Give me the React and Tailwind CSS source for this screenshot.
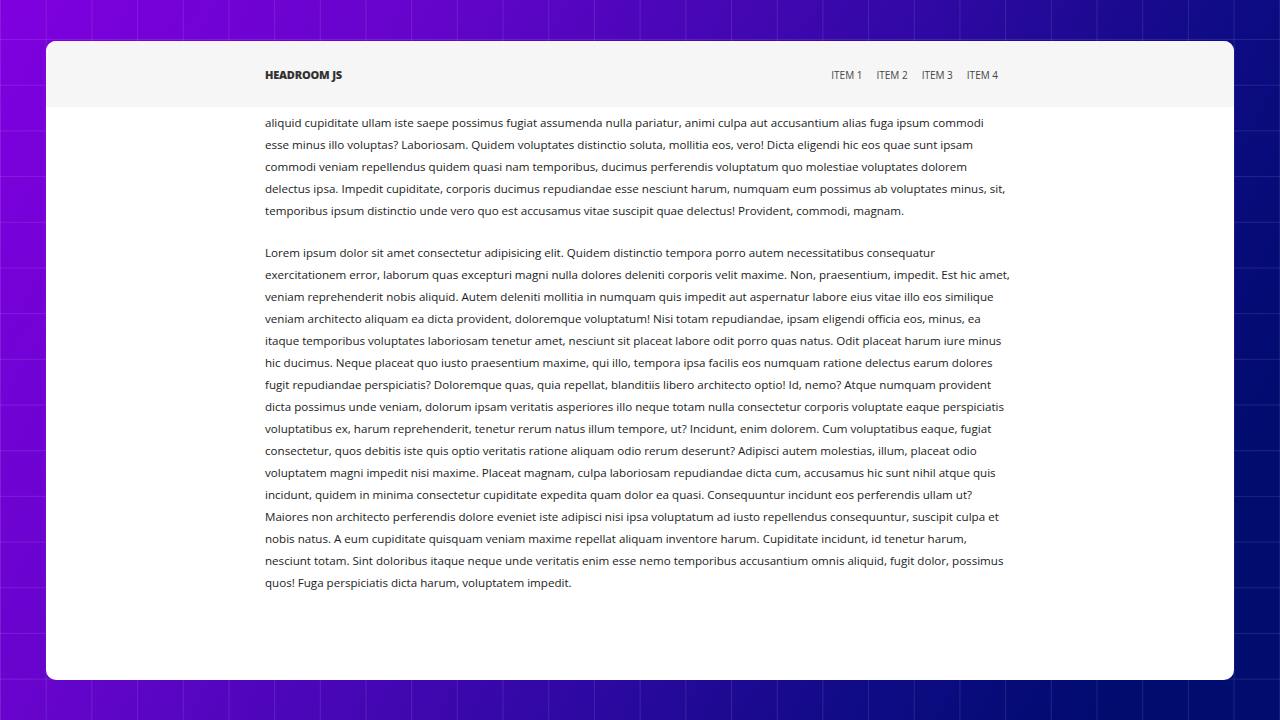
const firstLines = [
  'aliquid cupiditate ullam iste saepe possimus fugiat assumenda nulla pariatur, animi culpa aut accusantium alias fuga ipsum commodi',
  'esse minus illo voluptas? Laboriosam. Quidem voluptates distinctio soluta, mollitia eos, vero! Dicta eligendi hic eos quae sunt ipsam',
  'commodi veniam repellendus quidem quasi nam temporibus, ducimus perferendis voluptatum quo molestiae voluptates dolorem',
  'delectus ipsa. Impedit cupiditate, corporis ducimus repudiandae esse nesciunt harum, numquam eum possimus ab voluptates minus, sit,',
  'temporibus ipsum distinctio unde vero quo est accusamus vitae suscipit quae delectus! Provident, commodi, magnam.',
];

const secondLines = [
  'Lorem ipsum dolor sit amet consectetur adipisicing elit. Quidem distinctio tempora porro autem necessitatibus consequatur',
  'exercitationem error, laborum quas excepturi magni nulla dolores deleniti corporis velit maxime. Non, praesentium, impedit. Est hic amet,',
  'veniam reprehenderit nobis aliquid. Autem deleniti mollitia in numquam quis impedit aut aspernatur labore eius vitae illo eos similique',
  'veniam architecto aliquam ea dicta provident, doloremque voluptatum! Nisi totam repudiandae, ipsam eligendi officia eos, minus, ea',
  'itaque temporibus voluptates laboriosam tenetur amet, nesciunt sit placeat labore odit porro quas natus. Odit placeat harum iure minus',
  'hic ducimus. Neque placeat quo iusto praesentium maxime, qui illo, tempora ipsa facilis eos numquam ratione delectus earum dolores',
  'fugit repudiandae perspiciatis? Doloremque quas, quia repellat, blanditiis libero architecto optio! Id, nemo? Atque numquam provident',
  'dicta possimus unde veniam, dolorum ipsam veritatis asperiores illo neque totam nulla consectetur corporis voluptate eaque perspiciatis',
  'voluptatibus ex, harum reprehenderit, tenetur rerum natus illum tempore, ut? Incidunt, enim dolorem. Cum voluptatibus eaque, fugiat',
  'consectetur, quos debitis iste quis optio veritatis ratione aliquam odio rerum deserunt? Adipisci autem molestias, illum, placeat odio',
  'voluptatem magni impedit nisi maxime. Placeat magnam, culpa laboriosam repudiandae dicta cum, accusamus hic sunt nihil atque quis',
  'incidunt, quidem in minima consectetur cupiditate expedita quam dolor ea quasi. Consequuntur incidunt eos perferendis ullam ut?',
  'Maiores non architecto perferendis dolore eveniet iste adipisci nisi ipsa voluptatum ad iusto repellendus consequuntur, suscipit culpa et',
  'nobis natus. A eum cupiditate quisquam veniam maxime repellat aliquam inventore harum. Cupiditate incidunt, id tenetur harum,',
  'nesciunt totam. Sint doloribus itaque neque unde veritatis enim esse nemo temporibus accusantium omnis aliquid, fugit dolor, possimus',
  'quos! Fuga perspiciatis dicta harum, voluptatem impedit.',
];

const navItems = ['ITEM 1', 'ITEM 2', 'ITEM 3', 'ITEM 4'];

// keeps the original line breaks of the copy
const Paragraph = ({ lines }) => (
  <p className="mb-5 text-[11.6px] leading-[22px] text-[#222]">
    {lines.map((line, i) => (
      <span key={i} className="block whitespace-nowrap">{line}</span>
    ))}
  </p>
);

export default function App() {
  return (
    <div
      className="h-[720px] w-full overflow-hidden bg-[linear-gradient(118deg,#7f00df_0%,#6604cc_25%,#3208a6_55%,#0e0b84_75%,#000c6e_90%)]"
      style={{ fontFamily: '"Open Sans", "Liberation Sans", sans-serif' }}
    >
      {/* grid pattern */}
      <div className="h-full w-full bg-[linear-gradient(to_right,rgba(255,255,255,0.1)_1px,transparent_1px),linear-gradient(to_bottom,rgba(255,255,255,0.1)_1px,transparent_1px)] bg-[size:45.7px_45.7px] bg-[position:0px_39px] pt-[41px] px-[46px] pb-[40px]">
        <div className="flex h-full flex-col overflow-hidden rounded-[10px] bg-white">
          {/* Header */}
          <header className="h-[66px] shrink-0 bg-[#f6f6f6] pr-[15px] pt-[2px]">
            <div className="mx-auto flex h-full w-[735px] items-center justify-between">
              <span className="text-[11px] font-extrabold tracking-[-0.2px] text-[#333]">HEADROOM JS</span>
              <nav className="flex items-center gap-[14px] pr-[2px]">
                {navItems.map((item) => (
                  <a key={item} href="#" className="text-[10px] text-[#444]">
                    {item}
                  </a>
                ))}
              </nav>
            </div>
          </header>

          {/* Content */}
          <main className="flex-1 pr-[15px] pt-[5px]">
            <div className="mx-auto w-[735px]">
              <Paragraph lines={firstLines} />
              <Paragraph lines={secondLines} />
            </div>
          </main>
        </div>
      </div>
    </div>
  );
}
